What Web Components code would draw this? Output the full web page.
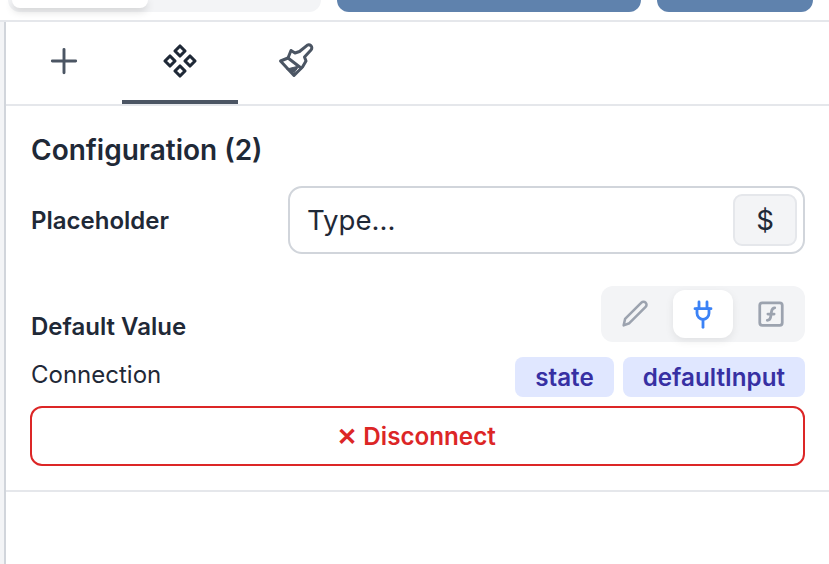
<!DOCTYPE html>
<html lang="en">
<head>
<meta charset="utf-8">
<title>Configuration</title>
<style>
    html, body { margin: 0; padding: 0; height: 100%; overflow: hidden; background: #fff; }
    body { font-family: Inter, "Liberation Sans", sans-serif; color: #1f2937; }
</style>
</head>
<body>
<app-topbar></app-topbar>
<side-panel>
    <panel-tabs></panel-tabs>
    <config-section></config-section>
</side-panel>

<script>
// Barre du haut : contrôle segmenté et deux boutons, coupés par le bord de la fenêtre
class AppTopbar extends HTMLElement {
    constructor() {
        super();
        this.attachShadow({ mode: 'open' });
        this.shadowRoot.innerHTML = `
            <style>
                :host { display: block; height: 22px; box-sizing: border-box; border-bottom: 2px solid #e5e7eb; }
                .row { display: flex; height: 12px; padding-left: 8px; }
                .segment { width: 313px; background: #f3f4f6; border-radius: 0 0 14px 14px; padding-left: 4px; box-sizing: border-box; }
                .thumb { width: 136px; height: 8px; background: #fff; border-radius: 0 0 12px 12px; box-shadow: 0 3px 8px rgba(0,0,0,.16); }
                .btn { background: #5f82ad; border-radius: 0 0 14px 14px; }
                .a { width: 304px; margin-left: 16px; }
                .b { width: 156px; margin-left: 16px; }
            </style>
            <div class="row">
                <div class="segment"><div class="thumb"></div></div>
                <div class="btn a"></div>
                <div class="btn b"></div>
            </div>
        `;
    }
}

class SidePanel extends HTMLElement {
    constructor() {
        super();
        this.attachShadow({ mode: 'open' });
        this.shadowRoot.innerHTML = `
            <style>
                :host { display: block; height: 542px; background: #f3f4f6; padding-left: 4px; }
                .inner { height: 100%; background: #fff; border-left: 2px solid #d1d5db; }
            </style>
            <div class="inner"><slot></slot></div>
        `;
    }
}

class PanelTabs extends HTMLElement {
    constructor() {
        super();
        this.attachShadow({ mode: 'open' });
        this.shadowRoot.innerHTML = `
            <style>
                :host { display: flex; height: 84px; box-sizing: border-box; border-bottom: 2px solid #e5e7eb; }
                .tab { width: 116px; height: 82px; box-sizing: border-box; display: flex; align-items: center; justify-content: center; color: #4b5563; border-bottom: 4px solid transparent; }
                .tab.active { color: #1f2937; border-bottom-color: #4b5563; }
                svg { display: block; fill: none; stroke: currentColor; stroke-width: 2; stroke-linecap: round; stroke-linejoin: round; }
            </style>
            <div class="tab">
                <svg width="40" height="40" viewBox="0 0 24 24" style="stroke-width:1.75"><path d="M12 5v14M5 12h14"/></svg>
            </div>
            <div class="tab active">
                <svg width="40" height="40" viewBox="0 0 24 24" style="stroke-width:1.9"><path d="M3 12l3 3l3 -3l-3 -3z"/><path d="M15 12l3 3l3 -3l-3 -3z"/><path d="M9 6l3 3l3 -3l-3 -3z"/><path d="M9 18l3 3l3 -3l-3 -3z"/></svg>
            </div>
            <div class="tab">
                <svg width="36" height="36" viewBox="0 0 36 36" style="stroke-width:3"><path d="M2.500 18L10 15L13 7.500L17 10L21.500 8.500L28.500 2.800a3 3 0 0 1 4.500 4.200L26.500 14L28 18L24.500 24L16 32.500Z"/><path d="M10 15L23 25"/><path d="M9 26L21 23L16 30Z" fill="currentColor" stroke-width="1"/></svg>
            </div>
        `;
    }
}

class InputBox extends HTMLElement {
    constructor() {
        super();
        this.attachShadow({ mode: 'open' });
        this.shadowRoot.innerHTML = `
            <style>
                :host { display: flex; align-items: center; justify-content: space-between; width: 517px; height: 68px; box-sizing: border-box; border: 2px solid #d1d5db; border-radius: 14px; padding: 0 6px 0 17px; background: #fff; }
                .value { font-size: 27.6px; color: #1f2937; }
                .dollar { width: 64px; height: 52px; box-sizing: border-box; display: flex; align-items: center; justify-content: center; background: #f3f4f6; border: 2px solid #e5e7eb; border-radius: 9px; font-size: 27.6px; color: #1f2937; }
            </style>
            <span class="value">Type...</span>
            <span class="dollar">$</span>
        `;
    }
}

class ModeToggle extends HTMLElement {
    constructor() {
        super();
        this.attachShadow({ mode: 'open' });
        this.shadowRoot.innerHTML = `
            <style>
                :host { display: flex; align-items: flex-start; gap: 8px; width: 204px; height: 56px; box-sizing: border-box; padding: 4px; background: #f3f4f6; border-radius: 12px; }
                .opt { flex: 0 0 60px; height: 48px; display: flex; align-items: center; justify-content: center; color: #9ca3af; border-radius: 12px; }
                .opt.active { background: #fff; color: #3b82f6; box-shadow: 0 3px 8px rgba(0,0,0,.08); }
                svg { display: block; fill: none; stroke: currentColor; stroke-width: 2; stroke-linecap: round; stroke-linejoin: round; }
            </style>
            <div class="opt"><svg width="34" height="34" viewBox="0 0 24 24" style="stroke-width:1.8"><path d="M4 20l1-4.500L16.500 4a2.100 2.100 0 0 1 3 3L8 18.500z"/></svg></div>
            <div class="opt active"><svg width="32" height="32" viewBox="0 0 24 24" style="stroke-width:2.1"><path d="M9 3v5M15 3v5M6 8h12"/><path d="M7.500 8v3.500a4.500 4.500 0 0 0 9 0V8"/><path d="M12 16v6"/></svg></div>
            <div class="opt"><svg width="30" height="30" viewBox="0 0 24 24" style="stroke-width:2.2"><rect x="3" y="3" width="18" height="18" rx="2"/><path d="M9 17c2 0 2.500-1 2.800-3l.6-4c.3-2 1-3 2.600-3M9.500 12h5"/></svg></div>
        `;
    }
}

class DataChip extends HTMLElement {
    constructor() {
        super();
        this.attachShadow({ mode: 'open' });
        this.shadowRoot.innerHTML = `
            <style>
                :host { display: inline-flex; align-items: center; height: 40px; padding: 0 20px; background: #e0e7ff; border-radius: 8px; color: #3730a3; font-size: 24.2px; font-weight: 600; box-sizing: border-box; }
            </style>
            <slot></slot>
        `;
    }
}

class ConfigSection extends HTMLElement {
    constructor() {
        super();
        this.attachShadow({ mode: 'open' });
        this.shadowRoot.innerHTML = `
            <style>
                :host { display: block; box-sizing: border-box; height: 386px; padding: 0 24px 0 24px; border-bottom: 2px solid #e5e7eb; }
                h2 { margin: 0; padding: 26px 0 0 1px; height: 36px; line-height: 36px; font-size: 28px; font-weight: 600; color: #1f2937; }
                .row { display: flex; align-items: center; justify-content: space-between; }
                .placeholder { margin-top: 18px; }
                label { font-size: 24px; font-weight: 600; color: #1f2937; padding-left: 1px; }
                .default { margin-top: 32px; align-items: flex-end; }
                .default label { line-height: 30px; }
                .connection { margin-top: 15px; align-items: flex-start; }
                .connection span { font-size: 24px; line-height: 36px; padding-left: 1px; color: #1f2937; }
                .chips { display: flex; gap: 9px; }
                .disconnect { display: flex; align-items: center; justify-content: center; margin-top: 9px; height: 60px; box-sizing: border-box; border: 2px solid #dc2626; border-radius: 12px; padding-right: 2px; color: #dc2626; font-size: 24.2px; font-weight: 600; }
            </style>
            <h2>Configuration (2)</h2>
            <div class="row placeholder">
                <label>Placeholder</label>
                <input-box></input-box>
            </div>
            <div class="row default">
                <label>Default Value</label>
                <mode-toggle></mode-toggle>
            </div>
            <div class="row connection">
                <span>Connection</span>
                <div class="chips">
                    <data-chip>state</data-chip>
                    <data-chip>defaultInput</data-chip>
                </div>
            </div>
            <div class="disconnect">✕ Disconnect</div>
        `;
    }
}

customElements.define('app-topbar', AppTopbar);
customElements.define('side-panel', SidePanel);
customElements.define('panel-tabs', PanelTabs);
customElements.define('input-box', InputBox);
customElements.define('mode-toggle', ModeToggle);
customElements.define('data-chip', DataChip);
customElements.define('config-section', ConfigSection);
</script>
</body>
</html>
